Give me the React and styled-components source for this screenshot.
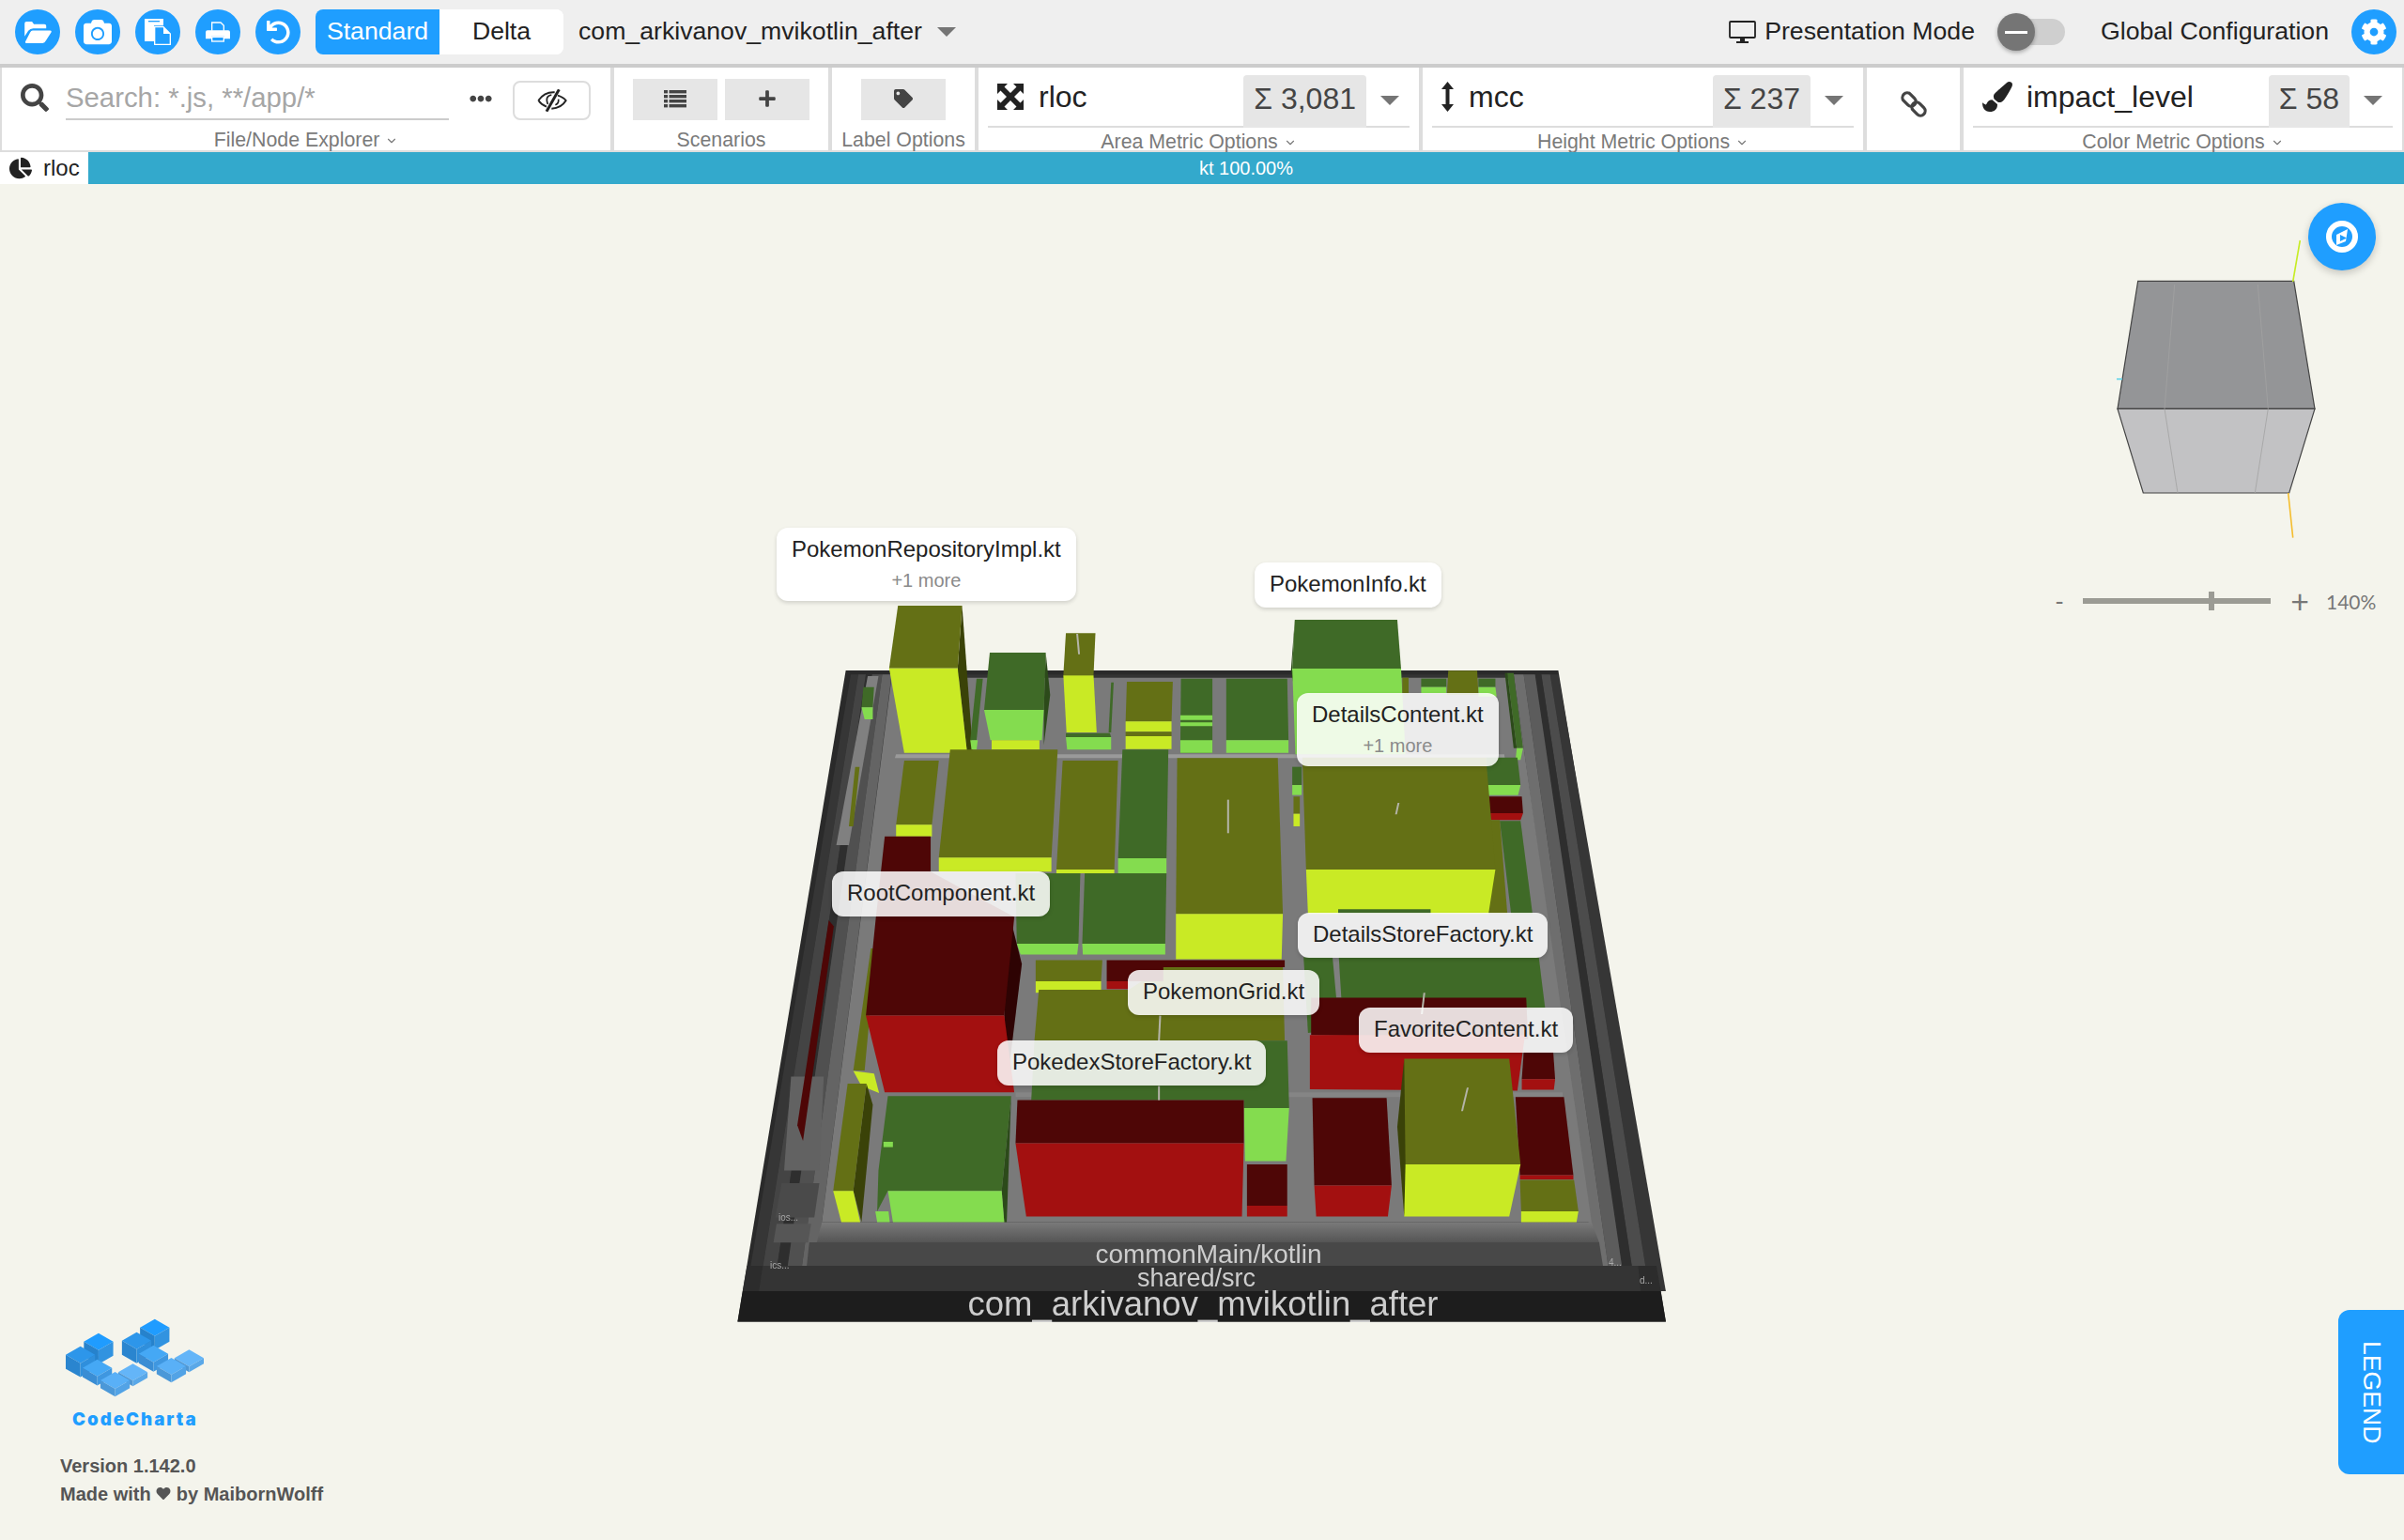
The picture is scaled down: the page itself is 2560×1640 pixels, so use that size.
import React from 'react';
import styled, { createGlobalStyle } from 'styled-components';
import {
	FaCamera, FaUndo, FaSearch, FaEllipsisH, FaPlus, FaTag, FaPaintBrush, FaCog, FaChartPie, FaHeart
} from 'react-icons/fa';
import { FiChevronDown } from 'react-icons/fi';

const OLIVE = ['#647015', '#c9ea25', '#3a4208'];
const GREEN = ['#3f6a27', '#84dc4f', '#2c4a1a'];
const RED = ['#4e0606', '#a31010', '#2e0303'];

// side bands of the map plate: [fill, top left, top right, bottom left, bottom right]
const BANDS = [
	['#363636', 218, 230, 52, 72],
	['#444444', 230, 242, 72, 95],
	['#2e2e2e', 242, 252, 95, 112],
	['#505050', 252, 268, 112, 135],
	['#646464', 268, 283, 135, 158],
	['#363636', 1330, 1343, 1488, 1514],
	['#4c4c4c', 1316, 1330, 1466, 1488],
	['#2e2e2e', 1306, 1316, 1450, 1466],
	['#5c5c5c', 1288, 1306, 1428, 1450],
	['#6e6e6e', 1272, 1288, 1406, 1428],
];

// faces of the city map in crop coordinates: [fill, points]
const FACES = [
	// back row
	[OLIVE[2], '395,315 412,780 403,785 388,515'],
	[OLIVE[0], '293,315 395,315 388,515 279,515'],
	[OLIVE[1], '279,515 388,515 403,785 303,785'],
	[GREEN[0], '238,575 255,575 253,640 235,640'],
	[GREEN[1], '235,640 253,640 253,678 240,678'],
	[GREEN[0], '418,548 428,548 418,745 408,745'],
	[GREEN[1], '408,745 420,745 418,775 410,775'],
	[GREEN[2], '528,465 535,600 525,760 525,648'],
	[GREEN[0], '439,465 528,465 525,648 430,648'],
	[GREEN[1], '430,648 525,648 522,745 440,745'],
	[OLIVE[1], '442,745 518,745 518,775 442,775'],
	[OLIVE[0], '560,403 607,403 604,538 556,538'],
	[OLIVE[1], '556,538 604,538 609,720 561,720'],
	[GREEN[0], '560,722 630,722 632,735 560,735'],
	[GREEN[1], '560,735 632,735 632,775 562,775'],
	[GREEN[0], '632,560 636,560 632,720 628,720'],
	[OLIVE[0], '657,558 730,558 728,685 655,685'],
	[OLIVE[1], '655,685 728,685 728,718 655,718'],
	[OLIVE[0], '655,718 728,718 728,732 655,732'],
	[OLIVE[1], '655,732 728,732 728,773 655,773'],
	[GREEN[0], '743,548 793,548 793,785 742,785'],
	[GREEN[1], '742,665 793,665 793,680 742,680'],
	[GREEN[1], '742,688 793,688 793,700 742,700'],
	[GREEN[1], '742,745 793,745 793,785 742,785'],
	[GREEN[0], '815,548 912,548 914,745 815,745'],
	[GREEN[1], '815,745 914,745 914,785 815,785'],
	[GREEN[2], '924,360 918,520 925,600 920,516'],
	[GREEN[0], '924,360 1087,360 1093,516 920,516'],
	[GREEN[1], '920,516 1093,516 1100,790 925,790'],
	[OLIVE[0], '1095,545 1105,545 1105,595 1095,595'],
	[GREEN[0], '1125,548 1165,548 1165,575 1125,575'],
	[GREEN[1], '1125,575 1165,575 1165,595 1125,595'],
	[GREEN[0], '1216,548 1243,548 1243,575 1216,575'],
	[GREEN[1], '1216,575 1243,575 1245,605 1216,605'],
	[OLIVE[0], '1168,523 1214,523 1216,600 1166,600'],
	[GREEN[2], '1258,530 1262,530 1277,770 1272,770'],
	[GREEN[0], '1262,530 1272,530 1287,770 1277,770'],
	[GREEN[1], '1277,770 1287,770 1283,808 1275,808'],
	// second row
	[OLIVE[0], '225,830 232,830 222,1020 215,1020'],
	[OLIVE[0], '303,810 358,810 347,1015 290,1015'],
	[OLIVE[1], '290,1015 347,1015 347,1052 290,1052'],
	[OLIVE[0], '376,775 547,775 537,1120 358,1120'],
	[OLIVE[1], '358,1120 537,1120 537,1165 358,1165'],
	[OLIVE[0], '555,810 643,810 637,1158 545,1158'],
	[OLIVE[1], '545,1158 637,1158 637,1170 545,1170'],
	[GREEN[0], '650,775 723,775 720,1122 643,1122'],
	[GREEN[1], '643,1122 720,1122 720,1170 643,1170'],
	[OLIVE[0], '737,802 897,802 905,1300 735,1300'],
	[OLIVE[1], '735,1300 905,1300 903,1445 735,1445'],
	[GREEN[0], '920,830 935,830 935,888 920,888'],
	[GREEN[1], '920,888 935,888 935,920 920,920'],
	[OLIVE[0], '922,925 932,925 932,980 922,980'],
	[OLIVE[1], '922,980 932,980 932,1020 922,1020'],
	[GREEN[0], '1228,800 1278,800 1283,888 1230,888'],
	[GREEN[1], '1230,888 1283,888 1279,920 1230,920'],
	[RED[0], '1228,925 1285,925 1287,978 1232,978'],
	[RED[1], '1232,978 1287,978 1283,1000 1236,1000'],
	[GREEN[0], '1250,1003 1283,1003 1302,1300 1268,1300'],
	[OLIVE[0], '1228,1000 1250,1000 1262,1300 1232,1300'],
	[OLIVE[0], '936,800 1228,800 1243,1158 942,1158'],
	[OLIVE[1], '942,1158 1243,1158 1232,1300 945,1300'],
	[GREEN[0], '993,1285 1140,1285 1140,1300 993,1300'],
	[GREEN[0], '480,1170 583,1170 580,1395 482,1395'],
	[GREEN[1], '482,1395 580,1395 578,1430 488,1430'],
	[GREEN[0], '590,1170 720,1170 718,1395 586,1395'],
	[GREEN[1], '586,1395 718,1395 718,1430 587,1430'],
	[RED[0], '183,1320 191,1340 142,2025 133,1975'],
	[OLIVE[0], '250,1410 258,1410 240,1800 222,1800'],
	[OLIVE[1], '222,1802 255,1810 263,1872 235,1850'],
	// root component
	[RED[2], '470,1300 490,1460 465,1870 462,1625'],
	[RED[0], '272,1052 345,1052 345,1165 478,1310 462,1625 242,1625 258,1310'],
	[RED[1], '242,1625 462,1625 478,1870 272,1870'],
	// front rows
	[OLIVE[2], '243,1842 253,1910 235,2285 222,2185'],
	[OLIVE[0], '213,1842 243,1842 222,2185 190,2185'],
	[OLIVE[1], '190,2185 222,2185 233,2285 203,2285'],
	[GREEN[2], '458,2185 473,1882 466,2285 462,2285'],
	[GREEN[0], '277,1882 473,1882 458,2185 277,2185 260,2250 262,2120'],
	[GREEN[1], '277,2185 458,2185 462,2285 285,2285'],
	[GREEN[1], '257,2250 278,2250 280,2285 260,2285'],
	[GREEN[1], '270,2028 285,2028 285,2045 270,2045'],
	[OLIVE[0], '512,1448 618,1448 616,1515 512,1515'],
	[OLIVE[1], '512,1515 616,1515 616,1542 512,1552'],
	[OLIVE[0], '517,1542 660,1542 715,1470 905,1470 908,1705 510,1705'],
	[RED[0], '625,1448 908,1448 908,1470 715,1470 715,1515 625,1515'],
	[RED[1], '625,1515 660,1515 660,1540 625,1540'],
	[GREEN[0], '510,1705 912,1705 915,1920 843,1920 843,1895 505,1895'],
	[GREEN[1], '843,1920 915,1920 910,2090 845,2090'],
	[RED[0], '483,1895 843,1895 843,2033 480,2033'],
	[RED[1], '480,2033 843,2033 840,2267 497,2267'],
	[RED[0], '848,2100 912,2100 912,2232 848,2232'],
	[RED[1], '848,2232 912,2232 912,2267 848,2267'],
	[GREEN[0], '938,1438 1312,1438 1322,1600 945,1680'],
	['#808080', '984,1438 994,1438 998,1568 990,1568'],
	[RED[0], '950,1568 1292,1568 1295,1700 950,1687'],
	[RED[1], '948,1687 1290,1687 1278,1865 948,1860'],
	[RED[0], '1288,1742 1335,1742 1338,1828 1285,1828'],
	[RED[1], '1285,1828 1338,1828 1336,1862 1285,1862'],
	[RED[0], '952,1888 1070,1888 1078,2168 955,2168'],
	[RED[1], '955,2168 1078,2168 1072,2267 958,2267'],
	[RED[0], '1275,1885 1352,1885 1367,2135 1282,2135'],
	[RED[1], '1282,2135 1367,2135 1367,2148 1282,2148'],
	[OLIVE[0], '1282,2150 1368,2150 1375,2250 1284,2250'],
	[OLIVE[1], '1284,2250 1375,2250 1372,2285 1284,2285'],
	[OLIVE[2], '1098,1763 1087,1980 1098,2267 1112,2100'],
	[OLIVE[0], '1098,1763 1265,1763 1283,2100 1100,2100'],
	[OLIVE[1], '1100,2100 1283,2100 1265,2267 1098,2267'],
];

const STREAKS = [
	'818,935 818,1042', '1089,945 1085,982', '578,405 581,470',
	'710,1625 708,1705', '708,1850 708,1895', '1130,1552 1126,1620', '1199,1855 1190,1930',
];

const LABELS = [
	{ name: 'PokemonRepositoryImpl.kt', more: true, x: 827, y: 366, solid: true },
	{ name: 'PokemonInfo.kt', x: 1336, y: 403, solid: true },
	{ name: 'DetailsContent.kt', more: true, x: 1381, y: 542 },
	{ name: 'RootComponent.kt', x: 886, y: 732 },
	{ name: 'DetailsStoreFactory.kt', x: 1382, y: 776 },
	{ name: 'PokemonGrid.kt', x: 1201, y: 837 },
	{ name: 'FavoriteContent.kt', x: 1447, y: 877 },
	{ name: 'PokedexStoreFactory.kt', x: 1062, y: 912 },
];

const CUBES = [
	{ cx: 314, cy: 150, d: 45, t: '#1f9cff', l: '#2682cc', r: '#3193e0' },
	{ cx: 256, cy: 192, d: 45, t: '#2d96ea', l: '#2a85cf', r: '#2f8fdc' },
	{ cx: 424, cy: 248, d: 18, t: '#64b5f8', l: '#4f97d4', r: '#5aa8e8' },
	{ cx: 310, cy: 234, d: 30, t: '#45a8f5', l: '#3a8dd4', r: '#3f97e0' },
	{ cx: 367, cy: 274, d: 25, t: '#59b0f7', l: '#4b98d8', r: '#52a3e6' },
];

const FolderIcon = () => (
	<svg width="29" height="23" viewBox="0 0 87 70" fill="currentColor">
		<path d="M0 6Q0 0 6 0H24L30 8H64Q70 8 70 14V22H28Q18 22 12 30L0 48Z" />
		<path d="M26 29H82Q89 29 86 35L69 62Q65 70 58 70H6Q0 70 3 64L18 35Q21 29 26 29Z" />
	</svg>
);

const FilesIcon = () => (
	<svg width="28" height="28" viewBox="0 0 84 84">
		<path fill="#fff" d="M0 0H60V22H30V72H0Z" />
		<rect x="12" y="6" width="36" height="4" fill="#1f9eff" />
		<path fill="#1f9eff" stroke="#fff" strokeWidth="4" d="M32 26H60L82 48V82H32Z" />
		<path fill="#fff" d="M60 26L82 48H60Z" />
	</svg>
);

const PrintIcon = () => (
	<svg width="26" height="22" viewBox="0 0 78 64">
		<path fill="none" stroke="#fff" strokeWidth="4" d="M20 28V2H48L58 12V28" />
		<path fill="#fff" d="M6 27H72Q78 27 78 33V54H60V46H18V54H0V33Q0 27 6 27Z" />
		<rect x="20" y="48" width="38" height="14" fill="none" stroke="#fff" strokeWidth="4" />
	</svg>
);

const EyeOffIcon = () => (
	<svg width="32" height="24" viewBox="0 0 96 72" fill="none" stroke="#222" strokeWidth="6">
		<path d="M4 36Q24 8 56 10M4 36Q14 50 30 56M66 20Q84 26 92 36Q78 60 46 62" />
		<path d="M46 18Q24 22 34 48M68 32Q70 46 58 50" strokeWidth="5" />
		<path d="M70 1L30 71" strokeWidth="9" />
	</svg>
);

const ListIcon = () => (
	<svg width="24" height="19" viewBox="0 0 24 19" fill="#444">
		{[0, 5, 10, 15].map(y => (
			<g key={y}>
				<rect y={y} width="4" height="3.4" />
				<rect x="5.5" y={y} width="18.5" height="3.4" />
			</g>
		))}
	</svg>
);

const ExpandIcon = () => (
	<svg width="28" height="28" viewBox="0 0 28 28" fill="#222">
		<path d="M0 0h11l-3.5 3.5 6.5 6.5 6.5-6.5L17 0h11v11l-3.5-3.5-6.5 6.5 6.5 6.5L28 17v11H17l3.5-3.5-6.5-6.5-6.5 6.5L11 28H0V17l3.5 3.5 6.5-6.5-6.5-6.5L0 11z" />
	</svg>
);

const VerticalIcon = () => (
	<svg width="13" height="32" viewBox="0 0 13 32" fill="#222">
		<path d="M6.5 0L13 8H8.5V24H13L6.5 32 0 24H4.5V8H0Z" />
	</svg>
);

const ChainIcon = () => (
	<svg width="30" height="30" viewBox="0 0 30 30" fill="none" stroke="#444" strokeWidth="3.2">
		<rect x="2" y="5" width="16" height="10" rx="5" transform="rotate(45 10 10)" />
		<rect x="12" y="15" width="16" height="10" rx="5" transform="rotate(45 20 20)" />
	</svg>
);

const MonitorIcon = () => (
	<svg width="29" height="24" viewBox="0 0 29 24" fill="#222">
		<rect x="1" y="1" width="27" height="17" rx="1" fill="none" stroke="#222" strokeWidth="1.8" />
		<rect x="12" y="19" width="5" height="3" />
		<rect x="8" y="22" width="13" height="2" />
	</svg>
);

const CompassIcon = () => (
	<svg width="34" height="34" viewBox="0 0 34 34">
		<circle cx="17" cy="17" r="14" fill="none" stroke="#fff" strokeWidth="6" />
		<polygon fill="#fff" points="11,15 23,9 21,22 11,26" />
		<polygon fill="#1f9eff" points="15,15 22,18.5 15,22" />
	</svg>
);

const Cube = ({ cx, cy, d, t, l, r, w = 47, h = 27 }) => (
	<g>
		<polygon fill={t} points={`${cx},${cy - h} ${cx + w},${cy} ${cx},${cy + h} ${cx - w},${cy}`} />
		<polygon fill={l} points={`${cx - w},${cy} ${cx},${cy + h} ${cx},${cy + h + d} ${cx - w},${cy + d}`} />
		<polygon fill={r} points={`${cx + w},${cy} ${cx},${cy + h} ${cx},${cy + h + d} ${cx + w},${cy + d}`} />
	</g>
);

const Logo = () => (
	<LogoSvg width="153" height="90" viewBox="200 70 460 270">
		{CUBES.map((c, i) => <Cube key={i} {...c} />)}
		<g transform="translate(180 -45)">
			{CUBES.map((c, i) => <Cube key={i} {...c} />)}
		</g>
	</LogoSvg>
);

const CityMap = () => (
	<MapSvg width="1050" height="900" viewBox="0 0 1050 900">
		<defs>
			<linearGradient id="fade" x1="0" y1="0" x2="0" y2="1">
				<stop offset="0" stopColor="#7a7a7a" />
				<stop offset="1" stopColor="#555555" />
			</linearGradient>
		</defs>
		<g transform="scale(.6697 .3333)">
			<polygon fill="#2a2a2a" points="210,522 1343,522 1514,2603 38,2603" />
			<polygon fill="#333333" points="232,535 1320,535 1471,2505 72,2505" />
			{BANDS.map(([fill, a, b, c, d], i) => (
				<polygon key={i} fill={fill} points={`${a},535 ${b},535 ${d},2505 ${c},2505`} />
			))}
			<polygon fill="#2c2c2c" points="53,2424 1499,2424 1506,2505 46,2505" />
			<polygon fill="#1d1d1d" points="46,2505 1506,2505 1514,2603 38,2603" />
			<polygon fill="#343434" points="78,2424 1470,2424 1474,2505 72,2505" />
			<polygon fill="#484848" points="152,2349 1408,2349 1414,2424 148,2424" />
			<polygon fill="#7a7a7a" points="283,545 1272,545 1396,2285 172,2285" />
			<polygon fill="url(#fade)" points="172,2285 1396,2285 1408,2349 164,2349" />
			<polygon fill="#9a9a9a" points="290,790 1257,790 1258,802 288,802" />
			<polygon fill="#858585" points="480,1870 1350,1870 1350,1885 480,1885" />
			<polygon fill="#808080" points="245,540 262,540 215,1080 195,1080" />
			<polygon fill="#626262" points="123,1820 175,1820 168,2120 112,2120" />
			<polygon fill="#4a4a4a" points="108,2160 168,2160 160,2270 98,2270" />
			<polygon fill="#565656" points="100,2290 155,2290 150,2350 95,2350" />
			{FACES.map(([fill, points], i) => <polygon key={i} fill={fill} points={points} />)}
			{STREAKS.map((points, i) => <polyline key={i} fill="none" stroke="#b4b4a8" strokeWidth="3" points={points} />)}
		</g>
		<TinyText x="69" y="760">ios...</TinyText>
		<TinyText x="60" y="811">ics...</TinyText>
		<TinyText x="953" y="808">4...</TinyText>
		<TinyText x="986" y="827">d...</TinyText>
		<MapText x="527" y="805" $size={28}>commonMain/kotlin</MapText>
		<MapText x="514" y="830" $size={27}>shared/src</MapText>
		<MapText x="521" y="861" $size={36.5}>com_arkivanov_mvikotlin_after</MapText>
	</MapSvg>
);

const NavCube = () => (
	<CubeSvg width="290" height="340" viewBox="2230 240 290 340">
		<polygon fill="#949597" stroke="#444" strokeWidth="1.2" points="2276.7,299.3 2442.7,299.3 2465,435.3 2255,435.3" />
		<polygon fill="#c2c2c4" stroke="#444" strokeWidth="1.2" points="2255,435.3 2465,435.3 2437.7,525 2282.3,525" />
		<g fill="none" stroke="#a2a2a2" strokeWidth=".8">
			<line x1="2315.7" y1="303" x2="2305" y2="435.3" />
			<line x1="2404.3" y1="303" x2="2415.3" y2="435.3" />
			<line x1="2305" y1="435.3" x2="2319" y2="525" />
			<line x1="2415.3" y1="435.3" x2="2401.3" y2="525" />
		</g>
		<line x1="2449.3" y1="256" x2="2441.7" y2="300" stroke="#c6ec22" strokeWidth="1.6" />
		<line x1="2436.7" y1="525" x2="2441.7" y2="572.7" stroke="#f4bd2e" strokeWidth="1.6" />
		<line x1="2254" y1="403.7" x2="2260" y2="403.7" stroke="#5fd4ea" strokeWidth="1.6" />
	</CubeSvg>
);

const Metric = ({ icon, name, sum, caption, width, slot }) => (
	<Panel $w={width}>
		<MetricRow>
			<MetricIcon $slot={slot}>{icon}</MetricIcon>
			<MetricName>{name}</MetricName>
			<MetricSum>Σ {sum}</MetricSum>
			<Arrow />
		</MetricRow>
		<Caption $low>{caption} <FiChevronDown /></Caption>
	</Panel>
);

const App = () => {
	return (
		<Page>
			<GlobalStyle />
			<TopBar>
				<RoundButton><FolderIcon /></RoundButton>
				<RoundButton><FaCamera size={30} /></RoundButton>
				<RoundButton><FilesIcon /></RoundButton>
				<RoundButton><PrintIcon /></RoundButton>
				<RoundButton><FaUndo size={25} /></RoundButton>
				<ModeSwitch>
					<ModeItem $active>Standard</ModeItem>
					<ModeItem>Delta</ModeItem>
				</ModeSwitch>
				<BarText>com_arkivanov_mvikotlin_after</BarText>
				<Arrow />
				<TopRight>
					<MonitorIcon />
					<BarText $left={9}>Presentation Mode</BarText>
					<Toggle><ToggleThumb /></Toggle>
					<BarText>Global Configuration</BarText>
					<RoundButton><FaCog size={28} /></RoundButton>
				</TopRight>
			</TopBar>

			<ToolRow>
				<Panel $w={648}>
					<SearchRow>
						<SearchIcon><FaSearch size={30} /></SearchIcon>
						<SearchField placeholder="Search: *.js, **/app/*" readOnly />
						<DotsIcon><FaEllipsisH size={24} /></DotsIcon>
						<EyeButton><EyeOffIcon /></EyeButton>
					</SearchRow>
					<Caption>File/Node Explorer <FiChevronDown /></Caption>
				</Panel>
				<Panel $w={228}>
					<ButtonRow>
						<GreyButton><ListIcon /></GreyButton>
						<GreyButton><FaPlus size={20} /></GreyButton>
					</ButtonRow>
					<Caption>Scenarios</Caption>
				</Panel>
				<Panel $w={152}>
					<ButtonRow>
						<GreyButton><FaTag size={20} /></GreyButton>
					</ButtonRow>
					<Caption>Label Options</Caption>
				</Panel>
				<Metric width={469} icon={<ExpandIcon />} name="rloc" sum="3,081" caption="Area Metric Options" slot={44} />
				<Metric width={469} icon={<VerticalIcon />} name="mcc" sum="237" caption="Height Metric Options" slot={29} />
				<LinkPanel><ChainIcon /></LinkPanel>
				<Metric width={467} icon={<FaPaintBrush size={32} />} name="impact_level" sum="58" caption="Color Metric Options" slot={47} />
			</ToolRow>

			<ProgressRow>
				<MetricTab><FaChartPie size={24} />rloc</MetricTab>
				<ProgressBar>kt 100.00%</ProgressBar>
			</ProgressRow>

			<Canvas>
				<CityMap />
				{LABELS.map(l => (
					<FileLabel key={l.name} $x={l.x} $y={l.y} $solid={l.solid}>
						{l.name}
						{l.more && <MoreText>+1 more</MoreText>}
					</FileLabel>
				))}
				<NavCube />
				<CompassButton><CompassIcon /></CompassButton>
				<ZoomControl>
					<ZoomSign>-</ZoomSign>
					<ZoomTrack><ZoomThumb /></ZoomTrack>
					<ZoomSign $big>+</ZoomSign>
					<ZoomValue>140%</ZoomValue>
				</ZoomControl>
				<LogoBlock>
					<Logo />
					<LogoName>CodeCharta</LogoName>
					<VersionText>
						<div>Version 1.142.0</div>
						<div>Made with <FaHeart /> by MaibornWolff</div>
					</VersionText>
				</LogoBlock>
				<LegendTab>LEGEND</LegendTab>
			</Canvas>
		</Page>
	);
}

export default App;


const GlobalStyle = createGlobalStyle`
	html, body {
		margin: 0;
		padding: 0;
		background: #f4f4ec;
	}
	* {
		box-sizing: border-box;
	}
`;

const Page = styled.div`
	width: 2560px;
	height: 1640px;
	display: flex;
	flex-direction: column;
	overflow: hidden;
	font-family: "Liberation Sans", Arial, sans-serif;
	color: #222;
`;

const TopBar = styled.div`
	height: 68px;
	flex: none;
	display: flex;
	align-items: center;
	gap: 16px;
	padding: 0 8px 0 16px;
	background: #efefef;
`;

const RoundButton = styled.div`
	width: 48px;
	height: 48px;
	flex: none;
	border-radius: 50%;
	background: #1f9eff;
	color: #fff;
	display: flex;
	align-items: center;
	justify-content: center;
`;

const ModeSwitch = styled.div`
	display: flex;
	height: 48px;
	border-radius: 8px;
	overflow: hidden;
	background: #fff;
`;

const ModeItem = styled.div`
	width: 132px;
	display: flex;
	align-items: center;
	justify-content: center;
	padding-bottom: 2px;
	font-size: 26.67px;
	background: ${props => props.$active ? '#1f9eff' : '#fff'};
	color: ${props => props.$active ? '#fff' : '#222'};
`;

const BarText = styled.span`
	margin-left: ${props => props.$left || 0}px;
	padding-bottom: 2px;
	font-size: 26.67px;
`;

const Arrow = styled.span`
	flex: none;
	width: 0;
	height: 0;
	border-left: 10px solid transparent;
	border-right: 10px solid transparent;
	border-top: 10px solid #757575;
`;

const TopRight = styled.div`
	margin-left: auto;
	display: flex;
	align-items: center;
	${BarText} {
		margin-right: 24px;
	}
`;

const Toggle = styled.div`
	width: 70px;
	height: 28px;
	border-radius: 14px;
	background: #cfcfcf;
	position: relative;
	margin: 0 38px 0 2px;
`;

const ToggleThumb = styled.div`
	position: absolute;
	left: -2px;
	top: -6px;
	width: 40px;
	height: 40px;
	border-radius: 50%;
	background: #757575;
	box-shadow: 0 2px 4px rgba(0, 0, 0, .3);
	&::after {
		content: '';
		position: absolute;
		left: 8px;
		top: 18.5px;
		width: 24px;
		height: 3px;
		background: #fff;
	}
`;

const ToolRow = styled.div`
	height: 94px;
	flex: none;
	display: flex;
	gap: 4px;
	padding: 0 3px 2px 2px;
	border-top: 4px solid #ccc;
	background: #ddd;
`;

const Panel = styled.div`
	width: ${props => props.$w}px;
	flex: none;
	display: flex;
	flex-direction: column;
	background: #fff;
`;

const Caption = styled.div`
	margin-top: auto;
	margin-bottom: ${props => props.$low ? '-2px' : '0'};
	height: 22px;
	line-height: 22px;
	text-align: center;
	font-size: 21.33px;
	color: #7a7a7a;
	svg {
		width: 14px;
		height: 14px;
		vertical-align: -1px;
	}
`;

const SearchRow = styled.div`
	height: 56px;
	display: flex;
	align-items: center;
	padding-left: 20px;
`;

const SearchIcon = styled.div`
	width: 30px;
	margin-top: 7px;
	display: flex;
	color: #444;
`;

const SearchField = styled.input`
	width: 408px;
	height: 50px;
	margin: 6px 0 0 18px;
	padding: 3px 0 0;
	border: 0;
	border-bottom: 2px solid #ccc;
	outline: none;
	background: transparent;
	font-family: inherit;
	font-size: 29.33px;
	&::placeholder {
		color: #a6a6a6;
	}
`;

const DotsIcon = styled.div`
	margin: 10px 0 0 22px;
	display: flex;
	color: #444;
`;

const EyeButton = styled.div`
	width: 83px;
	height: 42px;
	margin: 14px 0 0 22px;
	border: 2px solid #ddd;
	border-radius: 8px;
	display: flex;
	align-items: center;
	justify-content: center;
`;

const ButtonRow = styled.div`
	height: 56px;
	display: flex;
	justify-content: center;
	align-items: flex-end;
	gap: 8px;
`;

const GreyButton = styled.div`
	width: 90px;
	height: 44px;
	background: #e6e6e6;
	color: #444;
	display: flex;
	align-items: center;
	justify-content: center;
	padding-bottom: 2px;
`;

const MetricRow = styled.div`
	height: 64px;
	margin: 0 10px;
	padding: 8px 11px 0 10px;
	display: flex;
	align-items: flex-start;
	border-bottom: 2px solid #ddd;
`;

const MetricIcon = styled.div`
	width: ${props => props.$slot}px;
	height: 32px;
	margin-top: 7px;
	flex: none;
	display: flex;
	align-items: center;
	color: #222;
`;

const MetricName = styled.div`
	font-size: 32px;
	line-height: 47px;
`;

const MetricSum = styled.div`
	margin: 0 15px 0 auto;
	height: 56px;
	padding: 0 11px;
	background: #e6e6e6;
	border-radius: 4px 4px 0 0;
	font-size: 32px;
	line-height: 50px;
	color: #444;
	& + ${Arrow} {
		margin-top: 22px;
	}
`;

const LinkPanel = styled.div`
	width: 99px;
	flex: none;
	background: #fff;
	display: flex;
	align-items: center;
	justify-content: center;
	padding-bottom: 10px;
`;

const ProgressRow = styled.div`
	height: 34px;
	flex: none;
	display: flex;
`;

const MetricTab = styled.div`
	width: 94px;
	background: #fff;
	display: flex;
	align-items: center;
	gap: 12px;
	padding-left: 10px;
	font-size: 24px;
`;

const ProgressBar = styled.div`
	flex: 1;
	background: #33a9cc;
	color: #fff;
	font-size: 20px;
	display: flex;
	align-items: center;
	justify-content: center;
`;

const Canvas = styled.div`
	flex: 1;
	position: relative;
	overflow: hidden;
	background: #f4f4ec;
`;

const MapSvg = styled.svg`
	position: absolute;
	left: 760px;
	top: 344px;
	filter: blur(.7px);
`;

const MapText = styled.text`
	font-family: "Liberation Sans", Arial, sans-serif;
	font-size: ${props => props.$size}px;
	fill: #cdcdcd;
	text-anchor: middle;
`;

const TinyText = styled.text`
	font-family: "Liberation Sans", Arial, sans-serif;
	font-size: 10px;
	fill: #a8a8a8;
`;

const FileLabel = styled.div`
	position: absolute;
	left: ${props => props.$x}px;
	top: ${props => props.$y}px;
	padding: 9px 16px 11px;
	border-radius: 12px;
	background: ${props => props.$solid ? '#fff' : 'rgba(255, 255, 255, .86)'};
	box-shadow: 0 2px 4px rgba(0, 0, 0, .15);
	font-size: 24px;
	line-height: 28px;
	text-align: center;
	color: #222;
`;

const MoreText = styled.div`
	margin-top: 8px;
	font-size: 20px;
	line-height: 22px;
	color: #8a8a8a;
`;

const CubeSvg = styled.svg`
	position: absolute;
	left: 2230px;
	top: 44px;
`;

const CompassButton = styled.div`
	position: absolute;
	left: 2458px;
	top: 20px;
	width: 72px;
	height: 72px;
	border-radius: 50%;
	background: #1f9eff;
	display: flex;
	align-items: center;
	justify-content: center;
	box-shadow: 0 3px 8px rgba(0, 0, 0, .2);
`;

const ZoomControl = styled.div`
	position: absolute;
	left: 2186px;
	top: 424px;
	height: 40px;
	display: flex;
	align-items: center;
	color: #777;
`;

const ZoomSign = styled.span`
	width: ${props => props.$big ? '22px' : '14px'};
	margin: ${props => props.$big ? '0 0 0 20px' : '0 18px 0 0'};
	font-family: Lato, sans-serif;
	font-size: ${props => props.$big ? '34px' : '26px'};
	text-align: center;
	line-height: 34px;
`;

const ZoomTrack = styled.div`
	width: 200px;
	height: 6px;
	background: #9b9b94;
	position: relative;
`;

const ZoomThumb = styled.div`
	position: absolute;
	left: 134px;
	top: -7px;
	width: 6px;
	height: 20px;
	background: #9b9b94;
`;

const ZoomValue = styled.span`
	margin-left: 17px;
	font-family: Lato, sans-serif;
	font-size: 21px;
`;

const LogoBlock = styled.div`
	position: absolute;
	left: 64px;
	top: 1206px;
	width: 320px;
`;

const LogoSvg = styled.svg`
	display: block;
	margin-left: 3px;
`;

const LogoName = styled.div`
	margin: 8px 0 0 13px;
	font-family: Inter, sans-serif;
	font-weight: 900;
	font-size: 18.7px;
	letter-spacing: 2px;
	color: #1f9eff;
`;

const VersionText = styled.div`
	margin-top: 23px;
	font-size: 20px;
	line-height: 30px;
	font-weight: 700;
	color: #555;
	svg {
		width: 16px;
		height: 15px;
	}
`;

const LegendTab = styled.div`
	position: absolute;
	right: 0;
	top: 1199px;
	width: 70px;
	height: 175px;
	background: #1f9eff;
	border-radius: 12px 0 0 12px;
	color: #fff;
	font-size: 26.67px;
	display: flex;
	align-items: center;
	justify-content: center;
	writing-mode: vertical-rl;
`;
